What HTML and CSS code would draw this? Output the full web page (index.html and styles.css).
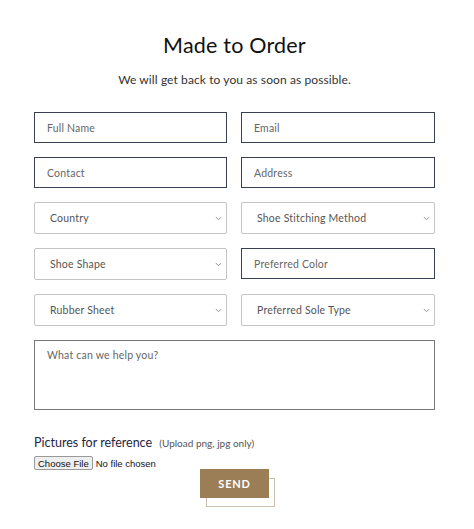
FILE: index.html
```html
<!DOCTYPE html>
<html>
<head>
<meta charset="utf-8">
<link rel="stylesheet" href="styles.css">
</head>
<body>
<main class="page">
  <h1 class="title">Made to Order</h1>
  <p class="subtitle">We will get back to you as soon as possible.</p>
  <form class="form">
    <div class="grid">
      <input class="field" type="text" placeholder="Full Name">
      <input class="field" type="text" placeholder="Email">
      <input class="field" type="text" placeholder="Contact">
      <input class="field" type="text" placeholder="Address">
      <div class="select-wrap">
        <select class="select"><option>Country</option></select>
        <svg class="chev" width="7" height="5" viewBox="0 0 7 5"><path d="M0.8 1 L3.5 3.8 L6.2 1" fill="none" stroke="#999" stroke-width="1"/></svg>
      </div>
      <div class="select-wrap">
        <select class="select"><option>Shoe Stitching Method</option></select>
        <svg class="chev" width="7" height="5" viewBox="0 0 7 5"><path d="M0.8 1 L3.5 3.8 L6.2 1" fill="none" stroke="#999" stroke-width="1"/></svg>
      </div>
      <div class="select-wrap">
        <select class="select"><option>Shoe Shape</option></select>
        <svg class="chev" width="7" height="5" viewBox="0 0 7 5"><path d="M0.8 1 L3.5 3.8 L6.2 1" fill="none" stroke="#999" stroke-width="1"/></svg>
      </div>
      <input class="field" type="text" placeholder="Preferred Color">
      <div class="select-wrap">
        <select class="select"><option>Rubber Sheet</option></select>
        <svg class="chev" width="7" height="5" viewBox="0 0 7 5"><path d="M0.8 1 L3.5 3.8 L6.2 1" fill="none" stroke="#999" stroke-width="1"/></svg>
      </div>
      <div class="select-wrap">
        <select class="select"><option>Preferred Sole Type</option></select>
        <svg class="chev" width="7" height="5" viewBox="0 0 7 5"><path d="M0.8 1 L3.5 3.8 L6.2 1" fill="none" stroke="#999" stroke-width="1"/></svg>
      </div>
      <textarea class="message" placeholder="What can we help you?"></textarea>
    </div>
    <div class="upload">
      <div class="upload-label">Pictures for reference <span class="hint">(Upload png, jpg only)</span></div>
      <input class="file" type="file">
    </div>
    <div class="actions">
      <div class="send-wrap">
        <span class="send-frame"></span>
        <button class="send" type="button">SEND</button>
      </div>
    </div>
  </form>
</main>
</body>
</html>
```
FILE: styles.css
```css
html, body {
  margin: 0;
  padding: 0;
  background: #fff;
}
.page {
  width: 401px;
  margin-left: 34px;
  padding-bottom: 20px;
  font-family: "Lato", "Liberation Sans", sans-serif;
  color: #222;
}
.title {
  margin: 0;
  padding-top: 32px;
  text-align: center;
  font-size: 21.5px;
  font-weight: 400;
  line-height: 26px;
  color: #111;
  letter-spacing: 0.2px;
}
.subtitle {
  margin: 15px 0 0;
  text-align: center;
  font-size: 12px;
  line-height: 14px;
  color: #333;
  letter-spacing: 0.1px;
}
.form {
  margin-top: 25px;
}
.grid {
  display: grid;
  grid-template-columns: 193px 194px;
  column-gap: 14px;
  row-gap: 14px;
}
.field {
  box-sizing: border-box;
  height: 31px;
  margin: 0;
  border: 1px solid #3b3f55;
  padding: 0 12px;
  font-family: inherit;
  font-size: 10.5px;
  letter-spacing: 0.2px;
  color: #333;
  background: #fff;
  outline: none;
}
.field::placeholder, .message::placeholder {
  color: #666;
}
.select-wrap {
  position: relative;
}
.select {
  box-sizing: border-box;
  width: 100%;
  height: 32px;
  margin: 0;
  border: 1px solid #c4c4c4;
  border-radius: 2px;
  padding: 0 15px;
  font-family: inherit;
  font-size: 10.5px;
  letter-spacing: 0.2px;
  color: #555;
  background: #fff;
  appearance: none;
  -webkit-appearance: none;
  outline: none;
}
.chev {
  position: absolute;
  right: 5px;
  top: 14px;
}
.message {
  grid-column: 1 / 3;
  box-sizing: border-box;
  height: 70px;
  margin: 0;
  border: 1px solid #777;
  padding: 8px 12px;
  font-family: inherit;
  font-size: 10.5px;
  letter-spacing: 0.2px;
  resize: none;
  outline: none;
}
.upload {
  margin-top: 25px;
}
.upload-label {
  font-size: 12.5px;
  color: #1e2640;
  line-height: 15px;
}
.hint {
  margin-left: 4px;
  font-size: 10px;
  color: #555;
}
.file {
  display: block;
  margin-top: 5px;
  font-family: "Liberation Sans", sans-serif;
  font-size: 9.5px;
  color: #111;
  height: 14px;
}
.file::file-selector-button {
  font-family: "Liberation Sans", sans-serif;
  font-size: 9.5px;
  height: 14px;
  padding: 0 3px;
  margin: 0 3px 0 0;
  border: 1px solid #999;
  border-radius: 2px;
  background: #efefef;
  color: #111;
}
.actions {
  display: flex;
  justify-content: center;
  margin-top: -1px;
}
.send-wrap {
  display: grid;
  margin-left: 6px;
}
.send-frame {
  grid-area: 1 / 1;
  width: 69px;
  height: 29px;
  box-sizing: border-box;
  margin: 9px 0 0 6px;
  border: 1px solid #c9c0b2;
}
.send {
  grid-area: 1 / 1;
  position: relative;
  z-index: 1;
  width: 69px;
  height: 29px;
  margin: 0;
  border: none;
  background: #9c7e56;
  color: #fff;
  font-family: inherit;
  font-size: 11px;
  font-weight: 700;
  letter-spacing: 0.8px;
}
```
